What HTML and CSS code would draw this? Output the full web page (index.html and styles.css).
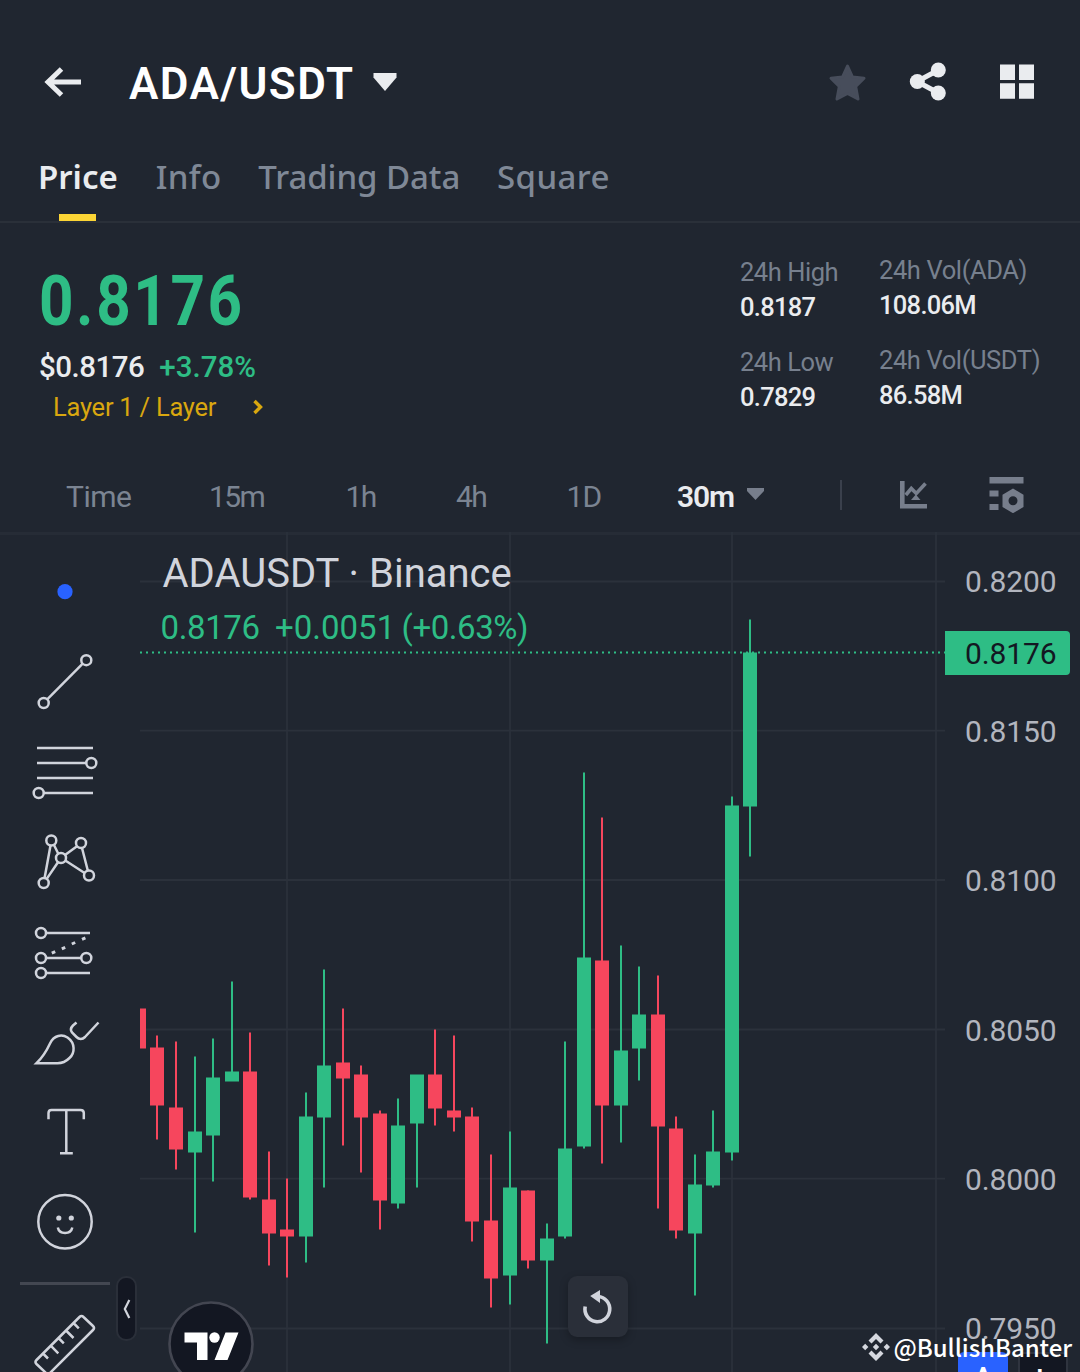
FILE: index.html
```
<!DOCTYPE html>
<html lang="en">
<head>
<meta charset="utf-8">
<title>ADA/USDT</title>
<link rel="stylesheet" href="styles.css">
</head>
<body>
<div class="screen">
  <header class="header">
    <svg class="back" width="38" height="30" viewBox="0 0 38 30"><path d="M17.500 2 4 15l13.500 13M3.500 15h33.500" fill="none" stroke="#eaecef" stroke-width="5"/></svg>
    <h1 class="pair">ADA/USDT</h1>
    <svg class="pair-caret" width="24" height="18" viewBox="0 0 24 18"><path d="M.5 0h23v4.500L12 18 .5 4.500z" fill="#eaecef"/></svg>
    <div class="actions">
      <svg width="38" height="40" viewBox="0 0 38 40"><path d="M19.500 4l5 11 11.500 1.300-8.300 8.200 2.300 12.500L19.500 31.500 9 37l2.300-12.500-8.300-8.200L14.500 15z" fill="#474d5b" stroke="#474d5b" stroke-width="3" stroke-linejoin="round"/></svg>
      <svg width="38" height="40" viewBox="0 0 38 40"><path d="M29.500 8 8 19.500 29.500 31" fill="none" stroke="#eaecef" stroke-width="5"/><g fill="#eaecef"><circle cx="8.300" cy="19.500" r="7.500"/><circle cx="29.300" cy="8" r="7.500"/><circle cx="29.300" cy="31" r="7.500"/></g></svg>
      <svg width="34" height="40" viewBox="0 0 34 40"><path d="M0 2.500h15v15.500H0zM19 2.500h15v15.500H19zM0 21.300h15v15.500H0zM19 21.300h15v15.500H19z" fill="#eaecef"/></svg>
    </div>
  </header>

  <nav class="tabs">
    <a class="tab tab-price active">Price</a>
    <a class="tab">Info</a>
    <a class="tab tab-data">Trading Data</a>
    <a class="tab">Square</a>
  </nav>

  <section class="ticker">
    <div class="quote">
      <div class="last">0.8176</div>
      <div class="fiat"><span class="fiat-value">$0.8176</span><span class="change">+3.78%</span></div>
      <div class="tag"><span>Layer 1 / Layer</span><svg width="10" height="16" viewBox="0 0 10 16"><path d="M1.500 2 7.500 8l-6 6" fill="none" stroke="#d9a70f" stroke-width="3.400"/></svg></div>
    </div>
    <div class="stats">
      <dl class="stat-col"><dt>24h High</dt><dd>0.8187</dd><dt>24h Low</dt><dd>0.7829</dd></dl>
      <dl class="stat-col volume"><dt>24h Vol(ADA)</dt><dd>108.06M</dd><dt>24h Vol(USDT)</dt><dd>86.58M</dd></dl>
    </div>
  </section>

  <section class="intervals">
    <span class="time">Time</span><span>15m</span><span>1h</span><span>4h</span><span class="day">1D</span>
    <span class="current">30m<svg width="17" height="12" viewBox="0 0 17 12"><path d="M0 0h17v3L8.500 12 0 3z" fill="#777e8c"/></svg></span>
    <i class="separator"></i>
    <svg width="28" height="28" viewBox="0 0 28 28"><g fill="none" stroke="#777e8c"><path d="M2.300 0v25.300H27" stroke-width="4.600"/><path d="M5.800 14 11.300 7.500l5 5L25.500 2.500" stroke-width="3.600"/></g><path d="M15.800 13.500 20.500 19h-9.500z" fill="#777e8c"/></svg>
    <svg width="36" height="36" viewBox="0 0 36 36"><path d="M.5 0h34v6.500H.5zM.5 13.500h9v6h-9zM.5 27h9v6h-9z" fill="#777e8c"/><path fill-rule="evenodd" d="M24 11.500 34.500 17.700V30L24 36.200 13.500 30V17.700zM24 19.300a4.500 4.500 0 1 0 0 9 4.500 4.500 0 0 0 0-9z" fill="#777e8c"/></svg>
  </section>

  <section class="chart">
    <aside class="tools">
      <svg viewBox="0 547 140 90"><circle cx="65" cy="591.7" r="7.600" fill="#2962ff"/></svg>
      <svg class="tool" viewBox="0 637 140 90"><path d="M47.200 699.300 82.700 663.700"/><circle cx="43.700" cy="703" r="5"/><circle cx="86.300" cy="660.200" r="5"/></svg>
      <svg class="tool" viewBox="0 727 140 90"><path d="M37 748h56M37 763h49M37 778h56M44 793h49"/><circle cx="91.300" cy="763" r="5"/><circle cx="38.700" cy="793" r="5"/></svg>
      <svg class="tool" viewBox="0 817 140 90"><path d="M50.500 845.500 44.600 878M54 845l4.300 8.700M65 855l12-8.700M58 862.200l-11.300 16.700M65.300 860.500l19.300 12.500M82 848l5.800 22.500"/><circle cx="51.300" cy="840.500" r="5"/><circle cx="81" cy="843" r="5"/><circle cx="61" cy="858" r="5"/><circle cx="43.700" cy="883" r="5"/><circle cx="89" cy="875.500" r="5"/></svg>
      <svg class="tool" viewBox="0 907 140 90"><path d="M46.500 933H90M46.500 958H81M46.500 973H90"/><circle cx="41" cy="933" r="5"/><circle cx="41" cy="958" r="5"/><circle cx="86.300" cy="958" r="5"/><circle cx="41" cy="973" r="5"/><path d="M51.800 953.200l3.400-1.500M61.800 948.800l3.400-1.500M71.800 944l3.400-1.500M82 939.300l3.400-1.500" stroke-width="3"/></svg>
      <svg class="tool" viewBox="0 997 140 90"><path d="M36.500 1063.200C44 1056 47 1050 50 1043.500 54 1035 62 1034 67.500 1037.500 75.500 1043 75 1053 69.500 1058 66 1061.500 62 1063.200 57.500 1063.200ZM76.500 1022.500 73 1025.500C70.500 1028 70.500 1030.500 72 1032.500L76.500 1037C79 1039.500 82.500 1039.500 85 1037L98.500 1022.500"/></svg>
      <svg class="tool" viewBox="0 1087 140 90"><path d="M48.500 1119.200V1113q0-3 3-3h29q3.300 0 3.300 3v6.200M66.300 1110v43M60 1153.300h12.800"/></svg>
      <svg class="tool" viewBox="0 1177 140 90"><circle cx="65" cy="1221.700" r="26.700"/><path d="M57.800 1227.500c1.500 7.300 13 7.300 14.500 0"/><g class="solid"><circle cx="58.800" cy="1218" r="2.600"/><circle cx="71.300" cy="1218" r="2.600"/></g></svg>
      <hr class="tools-rule">
      <svg class="tool ruler" viewBox="0 1299 140 73"><path d="M36.500 1360 79.500 1317q2-2 4 0l9.500 9q2 2 0 4L50 1373q-2 2-4 0l-9.500-9q-2-2 0-4ZM43 1353.500l5 5M50.700 1345.700l7.600 7.600M58.500 1338l5.300 5.300M66 1330.500l7.500 7.500M73.500 1323l5.300 5.300"/></svg>
    </aside>

    <div class="plot">
      <svg class="candles" viewBox="140 532 805 840">
        <path class="grid" d="M140 581.500h805M140 730.600h805M140 880h805M140 1029.500h805M140 1178.700h805M140 1328.500h805M287 532v840M510 532v840M732 532v840M936 532v840"/>
        <path class="price-line" d="M140 652.500h805"/>
        <path class="wick down" d="M157 1035.500V1139.500M176 1041.500V1169.500M250 1032.500V1199.500M269 1151.500V1265.500M287 1178.500V1277.500M343 1008.500V1145.500M361 1065.500V1172.500M380 1110.500V1229.500M435 1029.500V1125.500M454 1035.500V1131.500M472 1107.500V1241.500M491 1154.500V1307.500M528 1190.500V1268.500M602 817.500V1163.500M658 975.500V1208.500M676 1116.500V1238.500"/>
        <path class="wick up" d="M195 1056.500V1232.500M213 1038.500V1181.500M232 981.500V1080M306 1092.500V1262.500M324 969.500V1187.500M398 1098.500V1208.500M417 1075V1187.500M510 1131.500V1304.500M547 1223.500V1343.500M565 1041.500V1238.500M584 772.500V1148.500M621 945.500V1142.500M639 966.500V1080.500M695 1154.500V1295.500M713 1110.500V1187.500M732 796.500V1160.500M750 619.500V856.500"/>
        <path class="body clipped down" d="M143 1008.500V1048.500"/>
        <path class="body down" d="M157 1047.500V1105.500M176 1107.500V1149.500M250 1071.500V1197.500M269 1199.500V1233.500M287 1229.500V1236.500M343 1062.500V1078.500M361 1074.500V1117.500M380 1113.500V1200.500M435 1074.500V1108.500M454 1110.500V1117.500M472 1116.500V1221.500M491 1220.500V1278.500M528 1190.500V1260.500M602 960.500V1105.500M658 1014.500V1126.500M676 1128.500V1230.500"/>
        <path class="body up" d="M195 1131.500V1152.500M213 1077.500V1135.500M232 1071.500V1081.500M306 1116.500V1236.500M324 1065.500V1117.500M398 1125.500V1203.500M417 1074.500V1123.500M510 1187.500V1275.500M547 1238.500V1260.500M565 1148.500V1236.500M584 957.500V1146.500M621 1050.500V1105.500M639 1014.500V1048.500M695 1184.500V1233.500M713 1151.500V1185.500M732 805.500V1152.500M750 652.500V806.500"/>
      </svg>
      <div class="legend">
        <div class="symbol">ADAUSDT · Binance</div>
        <div class="legend-values"><span class="close">0.8176</span><span class="delta">+0.0051</span><span class="percent">(+0.63%)</span></div>
      </div>
      <button class="reset"><svg width="34" height="40" viewBox="0 0 34 40"><path d="M4.200 19.500A12.400 12.600 0 1 0 17 9.500" fill="none" stroke="#d1d4dc" stroke-width="3.600"/><path d="M19 3V16L9.200 9z" fill="#d1d4dc"/></svg></button>
      <svg class="tv-logo" width="86" height="86" viewBox="0 0 86 86"><circle cx="43" cy="43" r="41.500" fill="#131722" stroke="#434651" stroke-width="2.600"/><path d="M16.500 31.500h23V59H29V41.500H16.500zM57.500 31.500h13L59.500 59h-13z" fill="#fff"/><circle cx="46.500" cy="36.500" r="5.200" fill="#fff"/></svg>
    </div>

    <div class="axis">
      <span>0.8200</span><span>0.8150</span><span>0.8100</span><span>0.8050</span><span>0.8000</span><span>0.7950</span>
      <b class="badge">0.8176</b>
      <b class="scale auto">A</b>
      <b class="scale log">L</b>
    </div>

    <button class="collapse"><svg width="10" height="20" viewBox="0 0 10 20"><path d="M7.300 1 2.800 10l4.500 9" fill="none" stroke="#d1d4dc" stroke-width="2.200"/></svg></button>
    <div class="watermark">
      <svg width="28" height="28" viewBox="0 0 28 28"><g fill="#d5d8df"><path d="M14 0 21.500 7.600 18.500 10.600 14 6 9.500 10.600 6.500 7.600zM14 28 21.500 20.400 18.500 17.400 14 22 9.500 17.400 6.500 20.400zM14 10.800 17.200 14 14 17.200 10.800 14zM3.200 10.800 6.400 14 3.200 17.200 0 14zM24.800 10.800 28 14 24.800 17.200 21.600 14z"/></g></svg>
      <span>@BullishBanter</span>
    </div>
  </section>
</div>
</body>
</html>
```
FILE: styles.css
```
* { box-sizing: border-box; }
body { margin: 0; background: #202630; color: #eaecef; font-family: Roboto, "Liberation Sans", sans-serif; }
svg { display: block; flex: none; }
button { padding: 0; border: 0; }
.screen { width: 1080px; height: 1372px; overflow: hidden; }

.header { display: flex; align-items: center; height: 153px; padding: 50px 46px 39px 43.500px; }
.pair { margin: 4px 0 0 47.5px; font-size: 44px; line-height: 60px; font-weight: 600; letter-spacing: 1.45px; color: #fff; }
.pair-caret { margin: 0 0 1px 18px; }
.actions { display: flex; align-items: center; gap: 43px; margin-left: auto; }
.actions svg:last-child { margin-left: 10px; }

.tabs { display: flex; gap: 36.8px; height: 70px; padding-left: 38px; border-bottom: 2px solid #2a3039; font-family: "Noto Sans", sans-serif; font-size: 33px; line-height: 47px; font-weight: 500; color: #7f8896; }
.tab { display: flex; flex-direction: column; align-items: center; letter-spacing: 0.4px; }
.tab-price { margin-right: 1px; }
.tab-data { letter-spacing: -0.07px; }
.tab.active { color: #eaecef; font-weight: 600; letter-spacing: 0; }
.tab.active::after { content: ""; width: 37px; height: 8px; margin-top: 13.5px; background: #fcd535; }

.ticker { display: flex; justify-content: space-between; height: 235px; }
.quote { padding: 43px 0 0 39px; }
.last { width: 240px; font-size: 70px; line-height: 70px; font-weight: 700; letter-spacing: 3px; color: #2ebd85; transform: scaleX(0.86); transform-origin: left; }
.fiat { display: flex; gap: 15px; margin-top: 11.4px; font-size: 29.5px; line-height: 41px; font-weight: 500; }
.fiat-value { letter-spacing: -0.5px; }
.change { color: #2ebd85; }
.tag { display: flex; align-items: center; gap: 37px; margin-top: 1.4px; padding-left: 14px; font-size: 25.5px; line-height: 34px; letter-spacing: -0.24px; color: #d9a70f; }
.stats { display: grid; grid-template-columns: 139px 201px; }
.stat-col { margin: 0; padding-top: 31.8px; font-size: 25.5px; line-height: 35px; letter-spacing: -0.46px; }
.stat-col.volume { padding-top: 29.8px; letter-spacing: -0.4px; }
.stat-col dt { color: #77808e; }
.stat-col dd { margin: 0 0 20px; font-weight: 500; letter-spacing: -0.7px; }

.intervals { display: grid; grid-template-columns: 143px 136.5px 110.5px 110.5px 110.5px 162.5px 60px 89.5px 36px; align-items: center; height: 77px; padding: 3px 0 0 66px; border-bottom: 3px solid #262c36; font-size: 30px; line-height: 40px; letter-spacing: -1.6px; color: #7b8492; }
.intervals .time { letter-spacing: -0.5px; }
.intervals .day { letter-spacing: -0.8px; }
.intervals .current { display: flex; align-items: center; gap: 13px; font-weight: 600; letter-spacing: -1.2px; color: #eaecef; }
.current svg { margin-bottom: 6px; }
.intervals > svg { margin-bottom: 4px; }
.separator { width: 2px; height: 30px; margin-bottom: 4px; background: #3a404c; }

.chart { position: relative; display: grid; grid-template-columns: 140px 805px 135px; height: 840px; margin-top: -3px; }
.tools { padding-top: 15px; }
.tools svg { width: 140px; height: 90px; }
.tools .ruler { height: 73px; }
.tool { fill: none; stroke: #d1d4dc; stroke-width: 2.5; }
.tool .solid { fill: #d1d4dc; stroke: none; }
.tools-rule { width: 90px; height: 3px; margin: 14.5px 0 14.5px 20px; border: 0; background: #434751; }

.plot { position: relative; }
.candles { width: 805px; height: 840px; }
.grid { stroke: #2b313b; stroke-width: 1.8; }
.price-line { stroke: #2ebd85; stroke-width: 2; stroke-dasharray: 2 4; }
.wick { stroke-width: 2; }
.body { stroke-width: 14; }
.body.clipped { stroke-width: 6; }
.up { stroke: #2ebd85; }
.down { stroke: #f6465d; }
.legend { position: absolute; left: 20.5px; top: 17px; }
.symbol { padding-left: 2px; font-size: 40px; line-height: 50px; color: #d1d4dc; white-space: nowrap; }
.legend-values { display: flex; margin-top: 9px; font-size: 33px; line-height: 40px; color: #2ebd85; }
.close { letter-spacing: -0.38px; }
.delta { margin-left: 15.4px; }
.percent { margin-left: 6.3px; letter-spacing: -0.43px; }
.reset { position: absolute; left: 428px; top: 744px; display: flex; align-items: center; justify-content: center; width: 60px; height: 61px; border-radius: 9px; background: #2a2f39; box-shadow: 0 3px 8px rgba(0, 0, 0, .28); }
.tv-logo { position: absolute; left: 28.4px; top: 768.5px; }

.axis { position: relative; display: flex; flex-direction: column; gap: 89.4px; padding: 20.4px 0 0 20px; font-size: 30px; line-height: 60px; letter-spacing: -0.12px; color: #b2b5be; }
.axis b { position: absolute; font-weight: 400; }
.badge { left: 0; top: 98.5px; width: 125px; height: 44px; padding-left: 20px; border-radius: 0 4px 4px 0; background: #2ebd85; color: #131722; line-height: 45px; }
.axis .scale { top: 820px; width: 50px; height: 50px; border-radius: 6px; font-size: 24px; line-height: 48px; font-weight: 700; text-align: center; color: #fff; }
.auto { left: 13px; background: #2962ff; }
.log { left: 73px; background: #131722; border: 2px solid #2f343f; }

.collapse { position: absolute; left: 116px; top: 744px; display: flex; align-items: center; justify-content: center; width: 21px; height: 65px; border: 2px solid #2a2f39; border-radius: 10px; background: #131722; }
.watermark { position: absolute; left: 862px; top: 795.5px; display: flex; align-items: center; gap: 3.5px; font-family: "Noto Sans CJK SC", "Noto Sans", sans-serif; font-size: 24px; line-height: 40px; font-weight: 500; letter-spacing: -0.05px; color: #fff; }
.watermark span { margin-top: -1px; }
```
